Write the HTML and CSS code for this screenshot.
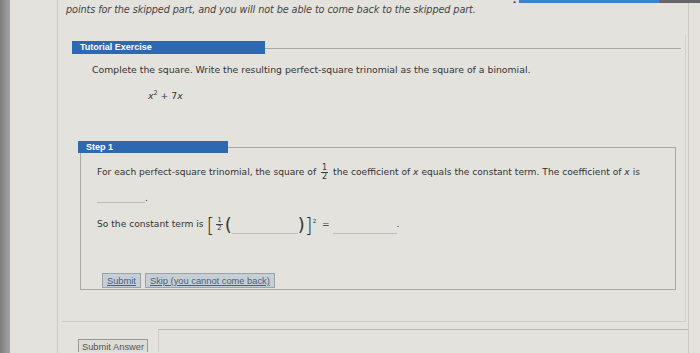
FILE: index.html
```html
<!DOCTYPE html>
<html>
<head>
<meta charset="utf-8">
<link rel="stylesheet" href="styles.css">
</head>
<body>
<div class="strip"></div>
<div class="main">
  <div class="topbar"><span class="topbar-icon">▲</span><span class="topbar-blue"></span><span class="topbar-dark"></span></div>
  <div class="panel">
    <p class="note">points for the skipped part, and you will not be able to come back to the skipped part.</p>
    <div class="question">
      <div class="tut-head"><span class="tut-title">Tutorial Exercise</span></div>
      <p class="prompt">Complete the square. Write the resulting perfect-square trinomial as the square of a binomial.</p>
      <p class="expr"><i>x</i><sup>2</sup> + 7<i>x</i></p>
      <div class="step">
        <div class="step-head"><span class="step-title">Step 1</span></div>
        <div class="step-box">
          <p class="line1">For each perfect-square trinomial, the square of <span class="frac"><span class="num">1</span><span class="den">2</span></span> the coefficient of <i>x</i> equals the constant term. The coefficient of <i>x</i> is</p>
          <p class="line2"><span class="blank b1"></span>.</p>
          <p class="line3">So the constant term is <span class="bracket">[</span><span class="frac small"><span class="num">1</span><span class="den">2</span></span><span class="paren">(</span><span class="blank b2"></span><span class="paren">)</span><span class="bracket">]</span><sup class="sq">2</sup> = <span class="blank b3"></span>.</p>
          <div class="buttons">
            <button class="btn">Submit</button>
            <button class="btn">Skip (you cannot come back)</button>
          </div>
        </div>
      </div>
    </div>
    <div class="bottom">
      <button class="btn2">Submit Answer</button>
      <div class="answer-box"></div>
    </div>
  </div>
</div>
</body>
</html>
```

FILE: styles.css
```css
html, body {
  margin: 0;
  padding: 0;
  height: 100%;
}
body {
  display: flex;
  background: #e4e2dd;
  font-family: "DejaVu Sans", Verdana, sans-serif;
  color: #333;
  overflow: hidden;
}
.strip {
  width: 10px;
  flex: none;
  background: linear-gradient(to right, #7d7d80, #a4a4a6);
}
.main {
  flex: 1;
  position: relative;
  padding-left: 47px;
}
.topbar {
  position: absolute;
  top: 0;
  left: 503px;
  display: flex;
  height: 3px;
}
.topbar-icon {
  width: 6px;
  height: 3px;
  font-size: 4px;
  line-height: 3px;
  color: #444;
  background: #ddd;
  overflow: hidden;
}
.topbar-blue {
  width: 140px;
  background: #3a82d0;
}
.topbar-dark {
  width: 45px;
  background: #666;
}
.panel {
  width: 632px;
  height: 100%;
  border-left: 1px solid #cdcac4;
  border-right: 1px solid #cdcac4;
  box-sizing: border-box;
  overflow: hidden;
}
.note {
  margin: 4px 0 0 8px;
  font-style: italic;
  font-size: 9.7px;
  color: #444;
  letter-spacing: -0.1px;
}
.question {
  margin: 20px 2px 0 4px;
  padding: 0 0 31px 10px;
  border-bottom: 1px solid #cfccc6;
  border-right: 1px solid #d4d1cb;
}
.tut-head {
  border-bottom: 1px solid #a9a8a5;
  height: 13px;
  margin-right: 4px;
}
.tut-title {
  display: inline-block;
  width: 185px;
  height: 13px;
  line-height: 13px;
  padding-left: 8px;
  background: #2e68b0;
  color: #fff;
  font-weight: bold;
  font-size: 9px;
  font-family: "Liberation Sans", Arial, sans-serif;
}
.prompt {
  margin: 15px 0 0 20px;
  font-size: 9.3px;
}
.expr {
  margin: 14px 0 0 76px;
  font-size: 9.3px;
}
.expr sup {
  font-size: 6.5px;
}
.step {
  margin: 34px 0 0 6px;
  width: 598px;
}
.step-head {
  height: 12px;
}
.step-title {
  display: inline-block;
  width: 142px;
  height: 12px;
  line-height: 12px;
  padding-left: 8px;
  background: #2e68b0;
  color: #fff;
  font-weight: bold;
  font-size: 9px;
  font-family: "Liberation Sans", Arial, sans-serif;
}
.step-box {
  margin-left: 2px;
  border: 1px solid #a9a8a5;
  padding: 16px 0 1px 16px;
  font-size: 9.15px;
}
.line1 {
  margin: 0;
  line-height: 14px;
}
.frac {
  display: inline-flex;
  flex-direction: column;
  vertical-align: middle;
  font-size: 8px;
  line-height: 7.5px;
  text-align: center;
  margin: 0 2px;
}
.frac.small {
  font-size: 7px;
  line-height: 7px;
}
.frac .num {
  border-bottom: 1px solid #444;
  padding: 0 1px;
}
.line2 {
  margin: 12px 0 0 0;
  height: 14px;
}
.blank {
  display: inline-block;
  border-bottom: 1px solid #bdbcb8;
  vertical-align: bottom;
}
.b1 { width: 48px; height: 10px; }
.b2 { width: 66px; height: 12px; }
.b3 { width: 64px; height: 12px; }
.line3 {
  margin: 5px 0 0 0;
  height: 20px;
  line-height: 20px;
}
.bracket {
  font-size: 20px;
  font-weight: 200;
  vertical-align: middle;
  line-height: 14px;
  font-family: "DejaVu Sans", sans-serif;
}
.paren {
  font-size: 18px;
  vertical-align: middle;
  line-height: 14px;
}
.sq {
  font-size: 5.5px;
  margin-right: 3px;
}
.buttons {
  margin-top: 42px;
  margin-left: 5px;
  display: flex;
  gap: 4px;
}
.btn {
  font-family: "Liberation Sans", Arial, sans-serif;
  font-size: 9.3px;
  color: #4a5e78;
  text-decoration: underline;
  background: #c6ced6;
  border: 1px solid #9aa2aa;
  padding: 1px 4px;
  height: 15px;
}
.bottom {
  display: flex;
  margin-top: 7px;
  margin-left: 20px;
  gap: 10px;
}
.btn2 {
  align-self: flex-start;
  margin-top: 10px;
  font-family: "Liberation Sans", Arial, sans-serif;
  font-size: 9.3px;
  color: #555;
  background: #dedcd6;
  border: 1px solid #9a9894;
  border-bottom: none;
  padding: 1px 3px 0;
  height: 13px;
  line-height: 12px;
}
.answer-box {
  flex: 1;
  height: 22px;
  border-top: 1px solid #bcbab5;
  border-left: 1px solid #cfccc6;
}
```
